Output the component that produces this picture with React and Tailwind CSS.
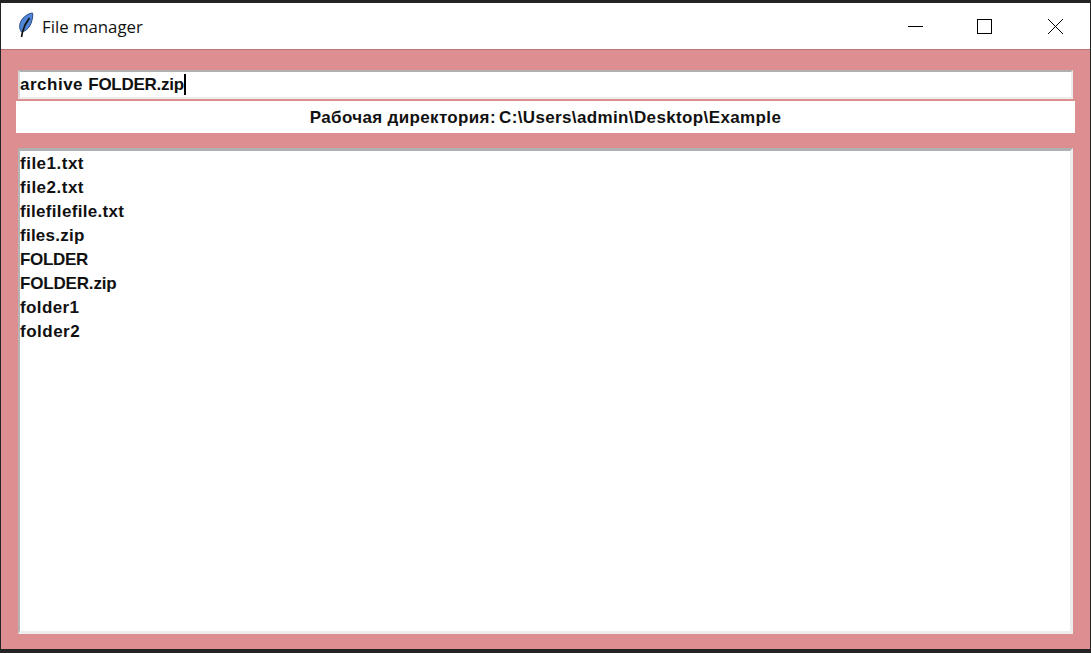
export default function App() {
  const files = [
    { name: "file1.txt", tracking: "tracking-[0.5px]" },
    { name: "file2.txt", tracking: "tracking-[0.5px]" },
    { name: "filefilefile.txt", tracking: "tracking-[0.32px]" },
    { name: "files.zip", tracking: "tracking-[0.25px]" },
    { name: "FOLDER", tracking: "tracking-[-0.33px]" },
    { name: "FOLDER.zip", tracking: "tracking-[-0.17px]" },
    { name: "folder1", tracking: "tracking-[0.38px]" },
    { name: "folder2", tracking: "tracking-[0.5px]" },
  ];
  return (
    <div className="w-[1091px] h-[653px] bg-[#232323] pt-[3px] pb-[4px] pl-px pr-px overflow-hidden flex flex-col font-['Liberation_Sans',Arial,sans-serif]">
      <div className="h-[46px] shrink-0 bg-white flex items-center">
        <svg className="ml-[16px] mt-[-3px]" width="18" height="26" viewBox="0 0 18 26" fill="none">
          <path d="M15.5 1C10.5 1.5 4 6 2.8 12.5C2.3 15.5 3 18 4.5 20C9.5 19 13 15 14.5 10C15.5 6.5 16.2 3.5 15.5 1Z" fill="#4f86d8" stroke="#2a4a80" strokeWidth="1" />
          <path d="M12.5 6L8 13L5.5 20L4.5 25" stroke="#151515" strokeWidth="1.7" fill="none" />
        </svg>
        <span className="ml-[7px] text-[16.8px] text-[#111] font-['Open_Sans',sans-serif] leading-none pt-[2px]">File manager</span>
        <div className="ml-auto flex items-center h-full mr-[27px]">
          <svg width="15" height="15" viewBox="0 0 15 15"><path d="M0 7.5H15" stroke="#000" strokeWidth="1" /></svg>
          <svg className="ml-[54px]" width="15" height="15" viewBox="0 0 15 15"><rect x="0.5" y="0.5" width="14" height="14" fill="none" stroke="#000" strokeWidth="1" /></svg>
          <svg className="ml-[56px]" width="15" height="15" viewBox="0 0 15 15"><path d="M0 0L15 15M15 0L0 15" stroke="#000" strokeWidth="1" /></svg>
        </div>
      </div>
      <div className="flex-1 min-h-0 bg-[#dc8e90] border-t border-[#b97476] pl-[15px] pr-[15px] flex flex-col">
        <div className="mt-[20px] mx-[2px] h-[29px] shrink-0 bg-white border-t-2 border-l-2 border-t-[#b0b0b0] border-l-[#d8d8d8] border-r-2 border-b-2 border-r-[#ededed] border-b-[#ededed] flex items-center">
          <span className="font-bold text-[17px] text-[#111] leading-none whitespace-pre">
            <span className="tracking-[0.5px]">archive </span>
            <span className="tracking-[-0.27px]">FOLDER.zip</span>
          </span>
          <span className="w-[2px] h-[21px] bg-black" />
        </div>
        <div className="mt-[2px] h-[32px] shrink-0 bg-white flex items-center justify-center font-bold text-[17px] text-[#111] leading-none pt-[1px] whitespace-pre">
          <span className="tracking-[0.35px]">Рабочая директория: </span>
          <span className="tracking-[0.37px] ml-[-2px]">C:\Users\admin\Desktop\Example</span>
        </div>
        <div className="mt-[15px] mx-[2px] h-[486px] shrink-0 bg-white border-t-[3px] border-l-2 border-t-[#b0b0b0] border-l-[#b4b4b4] border-r-[3px] border-b-[3px] border-r-[#ededed] border-b-[#ededed] pt-[1px]">
          <ul>
            {files.map((f) => (
              <li key={f.name} className={`h-[24px] font-bold text-[17px] text-[#111] leading-[24px] ${f.tracking}`}>
                {f.name}
              </li>
            ))}
          </ul>
        </div>
      </div>
    </div>
  );
}
